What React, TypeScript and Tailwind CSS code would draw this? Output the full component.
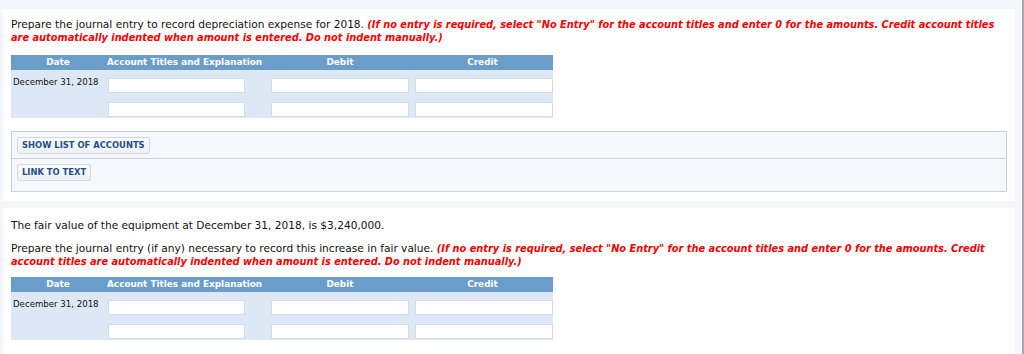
const font = { fontFamily: '"DejaVu Sans", Verdana, sans-serif' }

function JournalTable() {
  return (
    <div className="w-[542px] text-[8.6px]">
      <div className="grid grid-cols-[94px_163px_144px_141px] h-[15px] items-center bg-[#6b9dcb] text-white font-bold text-[8.9px]">
        <div className="text-center">Date</div>
        <div className="pl-[2px]">Account Titles and Explanation</div>
        <div className="text-center">Debit</div>
        <div className="text-center">Credit</div>
      </div>
      <div className="grid grid-cols-[94px_163px_144px_141px] bg-[#dde8f7] pt-[8px] pb-[1px] gap-y-[9px]">
        <div className="pl-[2px] leading-[9px] text-[#111]">December 31, 2018</div>
        <div className="pl-[3px]">
          <div className="w-[137px] h-[15px] bg-white border border-[#d6dbe0]" />
        </div>
        <div className="pl-[3px]">
          <div className="w-[138px] h-[15px] bg-white border border-[#d6dbe0]" />
        </div>
        <div className="pl-[3px]">
          <div className="w-[138px] h-[15px] bg-white border border-[#d6dbe0]" />
        </div>
        <div />
        <div className="pl-[3px]">
          <div className="w-[137px] h-[15px] bg-white border border-[#d6dbe0]" />
        </div>
        <div className="pl-[3px]">
          <div className="w-[138px] h-[15px] bg-white border border-[#d6dbe0]" />
        </div>
        <div className="pl-[3px]">
          <div className="w-[138px] h-[15px] bg-white border border-[#d6dbe0]" />
        </div>
      </div>
    </div>
  )
}

function SmallButton({ label }: { label: string }) {
  return (
    <button className="flex items-center h-[17px] px-[4px] rounded-[2px] border border-[#d3d8de] bg-gradient-to-b from-[#fbfcfd] to-[#eef1f4] text-[8.4px] font-bold text-[#1f4f8a] leading-none">
      {label}
    </button>
  )
}

export default function App() {
  return (
    <div
      className="w-[1024px] h-[354px] overflow-hidden bg-[#f3f6fa] pl-[3px] pt-[9px] pr-[7px] border-r-2 border-[#a8a8a8] flex flex-col gap-[7px] text-[#111]"
      style={font}
    >
      <section className="bg-white px-[8px] pt-[9px] pb-[9px] flex flex-col">
        <p className="text-[10.6px] leading-[12px] whitespace-nowrap">
          Prepare the journal entry to record depreciation expense for 2018.{' '}
          <span className="text-[#f50000] font-bold italic text-[9.8px]">
            (If no entry is required, select "No Entry" for the account titles and enter 0 for the amounts. Credit account titles
            <br />
            are automatically indented when amount is entered. Do not indent manually.)
          </span>
        </p>
        <div className="mt-[11px]">
          <JournalTable />
        </div>
        <div className="mt-[13px] w-[996px] border border-[#c8d1dd] bg-[#f5f8fc]">
          <div className="flex px-[5px] pt-[5px] pb-[4px] border-b border-[#c8d1dd]">
            <SmallButton label="SHOW LIST OF ACCOUNTS" />
          </div>
          <div className="flex px-[5px] pt-[5px] pb-[10px]">
            <SmallButton label="LINK TO TEXT" />
          </div>
        </div>
      </section>

      <section className="flex-1 bg-white px-[8px] pt-[11px] flex flex-col">
        <p className="text-[10.6px] leading-[12px]">The fair value of the equipment at December 31, 2018, is $3,240,000.</p>
        <p className="mt-[11px] text-[10.6px] leading-[12px] whitespace-nowrap">
          Prepare the journal entry (if any) necessary to record this increase in fair value.{' '}
          <span className="text-[#f50000] font-bold italic text-[9.8px]">
            (If no entry is required, select "No Entry" for the account titles and enter 0 for the amounts. Credit
            <br />
            account titles are automatically indented when amount is entered. Do not indent manually.)
          </span>
        </p>
        <div className="mt-[9px]">
          <JournalTable />
        </div>
      </section>
    </div>
  )
}
